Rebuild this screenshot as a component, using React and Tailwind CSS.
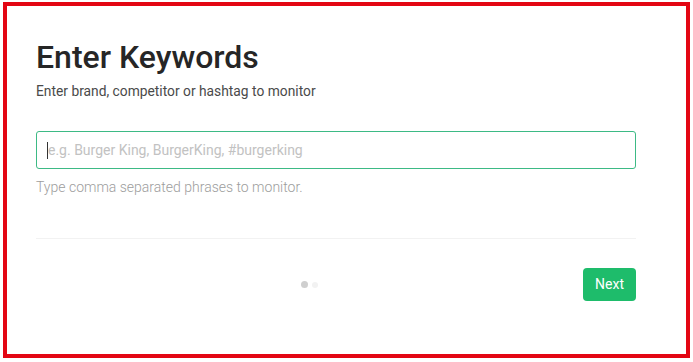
export default function App() {
  return (
    <div className="w-[693px] h-[362px] bg-white overflow-hidden" style={{ fontFamily: "Roboto, 'Liberation Sans', sans-serif" }}>
      <div className="ml-[3px] mt-[2px] w-[687px] h-[356px] border-4 border-[#e30613] bg-white">
        <div className="w-[600px] ml-[29px] pt-[32px]">
          <h1 className="text-[32px] leading-[38px] font-medium text-[#262626]">Enter Keywords</h1>
          <p className="mt-[5px] text-[13.8px] leading-[20px] text-[#4a4a4a]">Enter brand, competitor or hashtag to monitor</p>

          <div className="mt-[30px] h-[38px] rounded-[3px] border border-[#3dba85] flex items-center px-[10px]">
            <span className="w-px h-[17px] bg-[#333]" />
            <input
              className="flex-1 outline-none bg-transparent text-[14px] text-[#333] placeholder:text-[#c2c2c2]"
              placeholder="e.g. Burger King, BurgerKing, #burgerking"
            />
          </div>
          <p className="mt-[9px] text-[14px] font-light leading-[18px] text-[#9d9d9d]">Type comma separated phrases to monitor.</p>

          <div className="mt-[42px] h-px bg-[#f2f2f2]" />

          <div className="mt-[29px] flex items-center">
            <div className="flex-1 flex justify-center items-center gap-[4px]">
              <span className="w-[7px] h-[7px] rounded-full bg-[#cfcfcf]" />
              <span className="w-[6px] h-[6px] rounded-full bg-[#f2f2f2]" />
            </div>
            <button className="w-[53px] h-[33px] rounded-[4px] bg-[#1ebc6b] text-white text-[14px]">Next</button>
          </div>
        </div>
      </div>
    </div>
  );
}
